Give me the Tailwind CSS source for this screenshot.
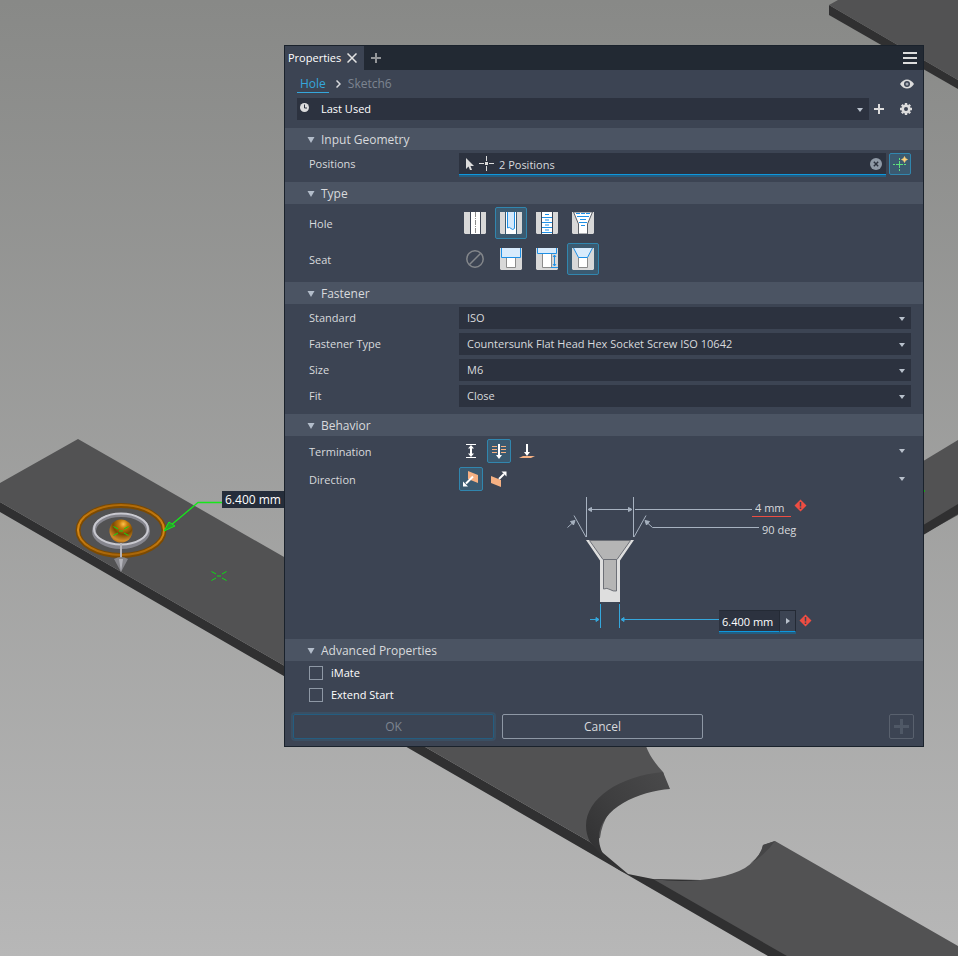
<!DOCTYPE html>
<html lang="en">
<head>
    <meta charset="UTF-8">
    <meta name="viewport" content="width=device-width, initial-scale=1.0">
    <title>Hole Properties</title>
    <script src="https://cdn.jsdelivr.net/npm/@tailwindcss/browser@4"></script>
</head>
<body class="relative min-h-screen overflow-hidden bg-linear-to-b from-[#888987] to-[#b7b7b7] font-['Open_Sans','Noto_Sans',sans-serif] text-[11px] leading-4 text-[#d8dadd]">

    <!-- model view -->
    <svg class="absolute inset-0 h-full w-full" viewBox="0 0 958 956" preserveAspectRatio="xMinYMin slice" fill="none">
        <defs>
            <linearGradient id="wall" x1="0" y1="1" x2="1" y2="0">
                <stop offset="0" stop-color="#2d2d2e"/><stop offset=".5" stop-color="#3e3e3f"/><stop offset="1" stop-color="#4a4a4b"/>
            </linearGradient>
            <linearGradient id="gold" x1="0" y1="0" x2="0" y2="1">
                <stop offset="0" stop-color="#b06a08"/><stop offset=".5" stop-color="#d98a16"/><stop offset="1" stop-color="#a86508"/>
            </linearGradient>
            <radialGradient id="ball" cx=".6" cy=".2" r=".9">
                <stop offset="0" stop-color="#ffc24a"/><stop offset=".2" stop-color="#c67c0c"/><stop offset=".5" stop-color="#7c4a02"/><stop offset=".8" stop-color="#d08a28"/><stop offset="1" stop-color="#a06010"/>
            </radialGradient>
        </defs>
        <!-- upper right plate -->
        <path d="M829 5 958 80V89L829 15Z" fill="#303031"/>
        <path d="M829 5 838 0H958V80Z" fill="#525253"/>
        <path d="M920 463 958 440V515L920 536Z" fill="#525253"/>
        <path d="M920 527 958 504V514L920 537Z" fill="#303031"/>
        <circle cx="924" cy="491" r="1" fill="#0c0"/>
        <!-- long plate -->
        <path d="M0 502 590 842 628 874 653 879 700 880 790 956H768L0 512Z" fill="#303031"/>
        <path d="M78 439 0 483V502L590 842 600 838C605 800 640 785 664 775L663 772Q650 758 646 746L600 738Z" fill="#525253"/>
        <path d="M663 772 670 789C640 791 599 808 599 838 599 855 612 868 628 874L605 859 590 842Q586 834 586 826C586 798 620 776 663 772Z" fill="url(#wall)"/>
        <path d="M653 879C690 884 725 879 745 868 757 860 762 852 763 845L775 841 958 946V956H787Z" fill="#525253"/>
        <path d="M763 845 775 841Q766 854 750 864 761 855 763 845Z" fill="#454546"/>
        <!-- hole preview -->
        <ellipse cx="121" cy="530.500" rx="43" ry="25" stroke="#7c4a02" stroke-width="5"/>
        <ellipse cx="121" cy="530" rx="43" ry="25" stroke="url(#gold)" stroke-width="2"/>
        <ellipse cx="121" cy="531" rx="27" ry="16" stroke="#85858d" stroke-width="4"/>
        <ellipse cx="121" cy="529" rx="27" ry="15.500" stroke="#c9c9d0" stroke-width="2"/>
        <circle cx="121" cy="531" r="11.500" fill="url(#ball)"/>
        <path d="M121 543V560" stroke="#b4b4ba" stroke-width="2"/>
        <path d="M114 559Q121 555 128 559L121 572Z" fill="#85858a"/>
        <path d="M119 559H123L121 572Z" fill="#b4b4ba"/>
        <path d="M113.500 526.500 118 529M128.500 526.500 124 529M113.500 535.500 118 533M128.500 535.500 124 533M119 531H123" stroke="#0bdc14"/>
        <path d="M211.500 571.500 216 574M226.500 571.500 222 574M211.500 580.500 216 578M226.500 580.500 222 578M217 576H221" stroke="#0bdc14"/>
        <path d="M170 526 198 502.500H222" stroke="#16e81a" stroke-width="1.300"/>
        <path d="M164 531 169 522 175 526Z" fill="#2a9d2d" stroke="#16e81a"/>
    </svg>
    <input aria-label="Diameter" value="6.400 mm" class="absolute top-[491px] left-[222px] h-[17px] w-[62px] bg-[#252d3a] pl-[3px] text-[12px] text-white">

    <!-- properties panel -->
    <section class="absolute top-[45px] left-[284px] w-[640px] border border-[#1a222c] bg-[#3c4453]">
        <div class="flex h-6 items-center bg-[#222933]">
            <div class="flex h-full w-[79px] items-center justify-between bg-[#3c4453] pr-[7px] pl-[3px] text-white">
                Properties
                <button aria-label="Close"><svg class="size-[10px]" viewBox="0 0 10 10" stroke="#e4e4e4" stroke-width="1.500"><path d="M.5.5 9.500 9.500M9.500.5.5 9.500"/></svg></button>
            </div>
            <button class="ml-[7px]" aria-label="New tab"><svg class="size-[10px]" viewBox="0 0 10 10" stroke="#949699" stroke-width="2"><path d="M5 0V10M0 5H10"/></svg></button>
            <button class="mr-[6px] ml-auto" aria-label="Menu"><svg class="h-3 w-[14px]" viewBox="0 0 14 12" fill="#dcdcdc"><path d="M0 0H14V2H0ZM0 5H14V7H0ZM0 10H14V12H0Z"/></svg></button>
        </div>

        <nav class="flex h-7 items-center pr-[9px] pl-3 text-[12px]">
            <a href="#" class="h-[18px] border-b border-[#35a7dc] px-[3px] leading-[18px] text-[#35a7dc]">Hole</a>
            <svg class="mx-[7px] h-2 w-[5px]" viewBox="0 0 5 8" fill="none" stroke="#d8dadd" stroke-width="1.500"><path d="M.5.5 4 4 .5 7.500"/></svg>
            <span class="leading-[18px] text-[#7c8491]">Sketch6</span>
            <button class="ml-auto" aria-label="Preview">
                <svg class="h-[10px] w-[14px]" viewBox="0 0 14 10"><path d="M0 5Q3 .5 7 .5T14 5Q11 9.500 7 9.500T0 5Z" fill="#dcdcdc"/><circle cx="7" cy="5" r="3" fill="#3c4453"/><circle cx="7" cy="5" r="1.500" fill="#a5abb4"/></svg>
            </button>
        </nav>

        <div class="flex items-center pr-[11px] pl-3">
            <div class="relative flex-1">
                <svg class="absolute top-[5px] left-[3px] size-[9px]" viewBox="0 0 9 9"><circle cx="4.500" cy="4.500" r="4.500" fill="#dcdcdc"/><path d="M4.500 1.500V5H7" stroke="#2c323f" fill="none"/></svg>
                <select aria-label="Preset" class="block h-[22px] w-full appearance-none bg-[#2c323f] pl-6 text-white"><option>Last Used</option></select>
                <svg class="pointer-events-none absolute top-[10px] right-[6px] h-[4px] w-[6px]" viewBox="0 0 6 4" fill="#b9c1cc"><path d="M0 0H6L3 4Z"/></svg>
            </div>
            <button class="ml-[5px]" aria-label="Save preset"><svg class="size-[10px]" viewBox="0 0 10 10" stroke="#dcdcdc" stroke-width="2"><path d="M5 0V10M0 5H10"/></svg></button>
            <button class="ml-4" aria-label="Settings">
                <svg class="size-3" viewBox="0 0 12 12" fill="none" stroke="#dcdcdc"><circle cx="6" cy="6" r="3.300" stroke-width="2.600"/><path d="M6 0V2M6 10V12M0 6H2M10 6H12M1.800 1.800 3.200 3.200M8.800 8.800 10.200 10.200M1.800 10.200 3.200 8.800M8.800 3.200 10.200 1.800" stroke-width="2.400"/></svg>
            </button>
        </div>

        <h2 class="mt-2 flex h-[22px] items-center gap-[6px] bg-[#4b5463] pt-[2px] pl-[22px] text-[12px]">
            <svg class="h-[6px] w-[8px]" viewBox="0 0 8 6" fill="#b3bdca"><path d="M.5 0H7.500L4 6Z"/></svg>Input Geometry
        </h2>
        <div class="flex h-8 items-start pt-[3px] pr-3 pl-6">
            <label for="positions" class="w-[150px] leading-[22px]">Positions</label>
            <div class="relative flex-1 border-b-2 border-[#245d80]">
                <svg class="absolute top-[5px] left-[6px] size-[13px]" viewBox="0 0 13 13" fill="#dcdcdc"><path d="M1 0V11L3.500 8.500 5 12H7L5.500 8H9Z"/></svg>
                <svg class="absolute top-[3px] left-5 size-[15px]" viewBox="0 0 15 15" fill="#dcdcdc"><path d="M7 0H8V5H7ZM7 10H8V15H7ZM0 7H5V8H0ZM10 7H15V8H10ZM6 6H9V9H6Z"/></svg>
                <input id="positions" readonly value="2 Positions" class="block h-[22px] w-full border-b border-[#0e97dd] bg-[#2c323f] pt-[2px] pl-10 outline-none">
                <button class="absolute top-[5px] right-[4px]" aria-label="Clear positions">
                    <svg class="size-3" viewBox="0 0 11 11"><circle cx="5.500" cy="5.500" r="5.500" fill="#8f99a6"/><path d="M3.500 3.500 7.500 7.500M7.500 3.500 3.500 7.500" stroke="#2c323f" stroke-width="1.300"/></svg>
                </button>
            </div>
            <button class="ml-[3px] size-[22px] rounded-[2px] border border-[#3186ae] bg-[#3b5a70]" aria-label="Create points">
                <svg class="size-5" viewBox="0 0 20 20" fill="none"><path d="M3 10.500H16M9.500 4V17" stroke="#5fe07c" stroke-dasharray="2 1 7 1 2"/><path d="M14.500 2.500 15.500 4.500 17.500 5.500 15.500 6.500 14.500 8.500 13.500 6.500 11.500 5.500 13.500 4.500Z" fill="#ffd27a" stroke="#ffd27a" stroke-width=".6"/></svg>
            </button>
        </div>

        <h2 class="flex h-[22px] items-center gap-[6px] bg-[#4b5463] pt-[2px] pl-[22px] text-[12px]">
            <svg class="h-[6px] w-[8px]" viewBox="0 0 8 6" fill="#b3bdca"><path d="M.5 0H7.500L4 6Z"/></svg>Type
        </h2>
        <div class="flex flex-col gap-1 pt-[3px] pb-[7px] pl-6">
            <div class="flex items-center">
                <span class="w-[150px] pt-[2px]">Hole</span>
                <div class="flex gap-1">
                    <button class="grid size-8 place-items-center" aria-label="Simple hole">
                        <svg class="size-[22px]" viewBox="0 0 22 22"><path d="M0 0H6V22H1L0 21ZM17 0H22V21L21 22H17Z" fill="#d8d8d8"/><path d="M7 0H16V22H7Z" fill="#fff"/><path d="M11.500 0V22" stroke="#8b8b8b" stroke-dasharray="5 1 1 1"/></svg>
                    </button>
                    <button class="grid size-8 place-items-center rounded-[2px] border border-[#3186ae] bg-[#3b5a70]" aria-label="Clearance hole">
                        <svg class="size-[22px]" viewBox="0 0 22 22"><path d="M0 0H5V22H1L0 21ZM17 0H22V21L21 22H17Z" fill="#d8d8d8"/><path d="M6 0H16V22H6Z" fill="#fff"/><path d="M7.500 0V16Q9.500 14.500 11 16.500T14.500 16.500V0" fill="#d4e9fb" stroke="#1e90e6"/></svg>
                    </button>
                    <button class="grid size-8 place-items-center" aria-label="Tapped hole">
                        <svg class="size-[22px]" viewBox="0 0 22 22"><path d="M0 0H5V22H1L0 21ZM17 0H22V21L21 22H17Z" fill="#d8d8d8"/><path d="M6 0H16V22H6Z" fill="#fff"/><path d="M6 5.500H16M6 10.500H16M6 15.500H16M6 20.500H16M9 2.500H13M9 8H13M9 13H13M9 18H13" stroke="#1e90e6"/></svg>
                    </button>
                    <button class="grid size-8 place-items-center" aria-label="Taper tapped hole">
                        <svg class="size-[22px]" viewBox="0 0 22 22"><path d="M0 0H22V21L21 22H1L0 21Z" fill="#d8d8d8"/><path d="M1.500 0 6.500 12V22H15.500V12L20.500 0Z" fill="#fff" stroke="#5b5f66"/><path d="M4 1.500H8M14 1.500H18M9 1.500H13M5 4.500H17M8 7.500H14M7 10.500H15M9 13.500H13" stroke="#1e90e6"/></svg>
                    </button>
                </div>
            </div>
            <div class="flex items-center">
                <span class="w-[150px] pt-[2px]">Seat</span>
                <div class="flex gap-1">
                    <button class="grid size-8 place-items-center" aria-label="None">
                        <svg class="size-[18px]" viewBox="0 0 18 18" fill="none" stroke="#84878b" stroke-width="1.500"><circle cx="9" cy="9" r="8.200"/><path d="M3.500 14.500 14.500 3.500"/></svg>
                    </button>
                    <button class="grid size-8 place-items-center" aria-label="Counterbore">
                        <svg class="size-[22px]" viewBox="0 0 22 22"><path d="M0 0H22V21L21 22H1L0 21Z" fill="#d8d8d8"/><path d="M6.500 9.500H15.500V19.500H6.500Z" fill="#fff" stroke="#8b8b8b"/><path d="M1.500 0V9.500H20.500V0" fill="#d8ebfc" stroke="#1e90e6"/></svg>
                    </button>
                    <button class="grid size-8 place-items-center" aria-label="Spotface">
                        <svg class="size-[22px]" viewBox="0 0 22 22"><path d="M0 0H22V21L21 22H1L0 21Z" fill="#d8d8d8"/><path d="M6.500 5.500H15.500V19.500H6.500Z" fill="#fff" stroke="#8b8b8b"/><path d="M1.500 0V5.500H20.500V0" fill="#d8ebfc" stroke="#1e90e6"/><path d="M15 19.500H22M18.500 7V18M17 9 18.500 7 20 9M17 16 18.500 18 20 16" fill="none" stroke="#1e90e6"/></svg>
                    </button>
                    <button class="grid size-8 place-items-center rounded-[2px] border border-[#3186ae] bg-[#3b5a70]" aria-label="Countersink">
                        <svg class="size-[22px]" viewBox="0 0 22 22"><path d="M0 0H22V21L21 22H1L0 21Z" fill="#d8d8d8"/><path d="M6.500 9.500H15.500V19.500H6.500Z" fill="#fff" stroke="#8b8b8b"/><path d="M1.500 0 6.500 9.500H15.500L20.500 0" fill="#d8ebfc" stroke="#1e90e6"/></svg>
                    </button>
                </div>
            </div>
        </div>

        <h2 class="flex h-[22px] items-center gap-[6px] bg-[#4b5463] pt-[2px] pl-[22px] text-[12px]">
            <svg class="h-[6px] w-[8px]" viewBox="0 0 8 6" fill="#b3bdca"><path d="M.5 0H7.500L4 6Z"/></svg>Fastener
        </h2>
        <div class="flex flex-col gap-1 pt-[3px] pr-3 pb-[7px] pl-6">
            <div class="flex items-center">
                <label for="standard" class="w-[150px]">Standard</label>
                <div class="relative flex-1">
                    <select id="standard" class="block h-[22px] w-full appearance-none bg-[#2c323f] pl-2"><option>ISO</option></select>
                    <svg class="pointer-events-none absolute top-[10px] right-[6px] h-[4px] w-[6px]" viewBox="0 0 6 4" fill="#b9c1cc"><path d="M0 0H6L3 4Z"/></svg>
                </div>
            </div>
            <div class="flex items-center">
                <label for="fastener" class="w-[150px]">Fastener Type</label>
                <div class="relative flex-1">
                    <select id="fastener" class="block h-[22px] w-full appearance-none bg-[#2c323f] pl-2"><option>Countersunk Flat Head Hex Socket Screw ISO 10642</option></select>
                    <svg class="pointer-events-none absolute top-[10px] right-[6px] h-[4px] w-[6px]" viewBox="0 0 6 4" fill="#b9c1cc"><path d="M0 0H6L3 4Z"/></svg>
                </div>
            </div>
            <div class="flex items-center">
                <label for="size" class="w-[150px]">Size</label>
                <div class="relative flex-1">
                    <select id="size" class="block h-[22px] w-full appearance-none bg-[#2c323f] pl-2"><option>M6</option></select>
                    <svg class="pointer-events-none absolute top-[10px] right-[6px] h-[4px] w-[6px]" viewBox="0 0 6 4" fill="#b9c1cc"><path d="M0 0H6L3 4Z"/></svg>
                </div>
            </div>
            <div class="flex items-center">
                <label for="fit" class="w-[150px]">Fit</label>
                <div class="relative flex-1">
                    <select id="fit" class="block h-[22px] w-full appearance-none bg-[#2c323f] pl-2"><option>Close</option></select>
                    <svg class="pointer-events-none absolute top-[10px] right-[6px] h-[4px] w-[6px]" viewBox="0 0 6 4" fill="#b9c1cc"><path d="M0 0H6L3 4Z"/></svg>
                </div>
            </div>
        </div>

        <h2 class="flex h-[22px] items-center gap-[6px] bg-[#4b5463] pt-[2px] pl-[22px] text-[12px]">
            <svg class="h-[6px] w-[8px]" viewBox="0 0 8 6" fill="#b3bdca"><path d="M.5 0H7.500L4 6Z"/></svg>Behavior
        </h2>
        <div class="flex flex-col gap-1 pt-[3px] pr-[18px] pl-6">
            <div class="flex items-center">
                <span class="w-[150px] pt-[2px]">Termination</span>
                <div class="flex gap-1">
                    <button class="grid size-6 place-items-center" aria-label="Distance">
                        <svg class="size-4" viewBox="0 0 16 16" fill="none" stroke="#fff"><path d="M3 1.500H13M3 14.500H13"/><path d="M8 4V12" stroke-width="2"/><path d="M5 5.500 8 2 11 5.500ZM5 10.500 8 14 11 10.500Z" fill="#fff" stroke="none"/></svg>
                    </button>
                    <button class="grid size-6 place-items-center rounded-[2px] border border-[#3186ae] bg-[#3b5a70]" aria-label="Through all">
                        <svg class="size-4" viewBox="0 0 16 16"><path d="M1 3.500H6M10 3.500H15M1 6.500H6M10 6.500H15M1 9.500H6M10 9.500H15" stroke="#f6b183"/><path d="M7 1H9V12H11L8 16 5 12H7Z" fill="#fff"/></svg>
                    </button>
                    <button class="grid size-6 place-items-center" aria-label="To">
                        <svg class="size-4" viewBox="0 0 16 16"><path d="M0 15 4 13H16L12 15Z" fill="#f6b183"/><path d="M7 1H9V9H11L8 13 5 9H7Z" fill="#fff"/></svg>
                    </button>
                </div>
                <button class="ml-auto" aria-label="More terminations"><svg class="h-[4px] w-[6px]" viewBox="0 0 6 4" fill="#b9c1cc"><path d="M0 0H6L3 4Z"/></svg></button>
            </div>
            <div class="flex items-center">
                <span class="w-[150px] pt-[2px]">Direction</span>
                <div class="flex gap-1">
                    <button class="grid size-6 place-items-center rounded-[2px] border border-[#3186ae] bg-[#3b5a70]" aria-label="Default">
                        <svg class="size-4" viewBox="0 0 16 16"><path d="M5 0 15 4V12L5 8Z" fill="#f6b183"/><path d="M10 5.500 3 12.500" stroke="#fff" stroke-width="2"/><path d="M0 15.500V10.500L5 15.500Z" fill="#fff"/></svg>
                    </button>
                    <button class="grid size-6 place-items-center" aria-label="Flipped">
                        <svg class="size-4" viewBox="0 0 16 16"><path d="M0 5 10 9V16L0 12Z" fill="#f6b183"/><path d="M8 8 13 3" stroke="#fff" stroke-width="2"/><path d="M10.500.5H15.500V5.500Z" fill="#fff"/></svg>
                    </button>
                </div>
                <button class="ml-auto" aria-label="More directions"><svg class="h-[4px] w-[6px]" viewBox="0 0 6 4" fill="#b9c1cc"><path d="M0 0H6L3 4Z"/></svg></button>
            </div>
        </div>

        <!-- dimension diagram -->
        <div class="relative ml-[265px] h-[148px] w-[280px]">
            <svg class="h-full w-full" viewBox="0 0 280 148" fill="none">
                <g stroke="#a7b2c0">
                    <path d="M36.500 6V46M83.500 6V46M40 18.500H80M85 18.500H202M24 24.500 36 46M96 24.500 84 46M17.500 36.500 23 31.500M209 36.500H102.500L97 31.500"/>
                    <path d="M38 18.500 41.500 16.500V20.500ZM82 18.500 78.500 16.500V20.500ZM25 29.500 20.500 30.500 23.500 34ZM95 29.500 99.500 30.500 96.500 34Z" fill="#a7b2c0"/>
                </g>
                <path d="M36 49H84L70 69.500V111H50V69.500Z" fill="#dedede"/>
                <path d="M39.500 49.500H80.500L67 68.500H53Z" fill="#b5b5b5" stroke="#6d7077"/>
                <path d="M53.500 68.500V98Q57 96.500 60 98.500T66.500 100V68.500Z" fill="#b5b5b5" stroke="#6d7077"/>
                <g stroke="#35a7dc">
                    <path d="M50.500 113V137M69.500 113V137M40 128.500H47M73 128.500H169"/>
                    <path d="M49 128.500 46 126.500V130.500ZM71 128.500 74 126.500V130.500Z" fill="#35a7dc"/>
                </g>
                <path d="M250.500 8.500 256.500 14.500 250.500 20.500 244.500 14.500ZM255.500 123.500 261.500 129.500 255.500 135.500 249.500 129.500Z" fill="#ee4d42"/>
                <path d="M250.500 11V15.500M250.500 16.500V18M255.500 126V130.500M255.500 131.500V133" stroke="#3c4453" stroke-width="1.500"/>
            </svg>
            <input aria-label="Countersink diameter" value="4 mm" class="absolute top-[7px] left-[202px] h-[19px] w-[39px] border-b border-[#ee4d42] pl-[3px]">
            <input aria-label="Countersink angle" value="90 deg" class="absolute top-[31px] left-[209px] h-4 w-11 pl-[3px]">
            <div class="absolute top-[119px] left-[169px] flex w-[77px] border-b-2 border-[#245d80]">
                <input aria-label="Hole diameter" value="6.400 mm" class="h-[22px] w-[60px] border-t border-b border-t-[#242a35] border-b-[#0e97dd] bg-[#2c323f] pl-[3px] text-white">
                <button class="grid h-[22px] flex-1 place-items-center border border-[#242a35] border-b-[#0e97dd]" aria-label="Diameter options"><svg class="h-[6px] w-[4px]" viewBox="0 0 4 6" fill="#b9c1cc"><path d="M0 0V6L4 3Z"/></svg></button>
            </div>
        </div>

        <h2 class="flex h-[22px] items-center gap-[6px] bg-[#4b5463] pt-[2px] pl-[22px] text-[12px]">
            <svg class="h-[6px] w-[8px]" viewBox="0 0 8 6" fill="#b3bdca"><path d="M.5 0H7.500L4 6Z"/></svg>Advanced Properties
        </h2>
        <div class="flex flex-col items-start gap-[6px] pt-1 pl-6 text-white">
            <label class="flex items-center gap-2"><input type="checkbox" class="size-[14px] appearance-none border border-[#8e98a5]">iMate</label>
            <label class="flex items-center gap-2"><input type="checkbox" class="size-[14px] appearance-none border border-[#8e98a5]">Extend Start</label>
        </div>
        <div class="flex items-center gap-2 pt-[11px] pr-[9px] pb-[7px] pl-2 text-[12px]">
            <button disabled class="h-[25px] w-[201px] rounded-[2px] border border-[#245d80] text-[#7c8491] ring-2 ring-[#3a4f63]">OK</button>
            <button class="h-[25px] w-[201px] rounded-[2px] border border-[#8e98a5]">Cancel</button>
            <button disabled class="ml-auto grid size-[25px] place-items-center rounded-[2px] border border-[#59616e]" aria-label="Create new"><svg class="size-[15px]" viewBox="0 0 15 15" stroke="#4f5866" stroke-width="3"><path d="M7.500 0V15M0 7.500H15"/></svg></button>
        </div>
    </section>
</body>
</html>
